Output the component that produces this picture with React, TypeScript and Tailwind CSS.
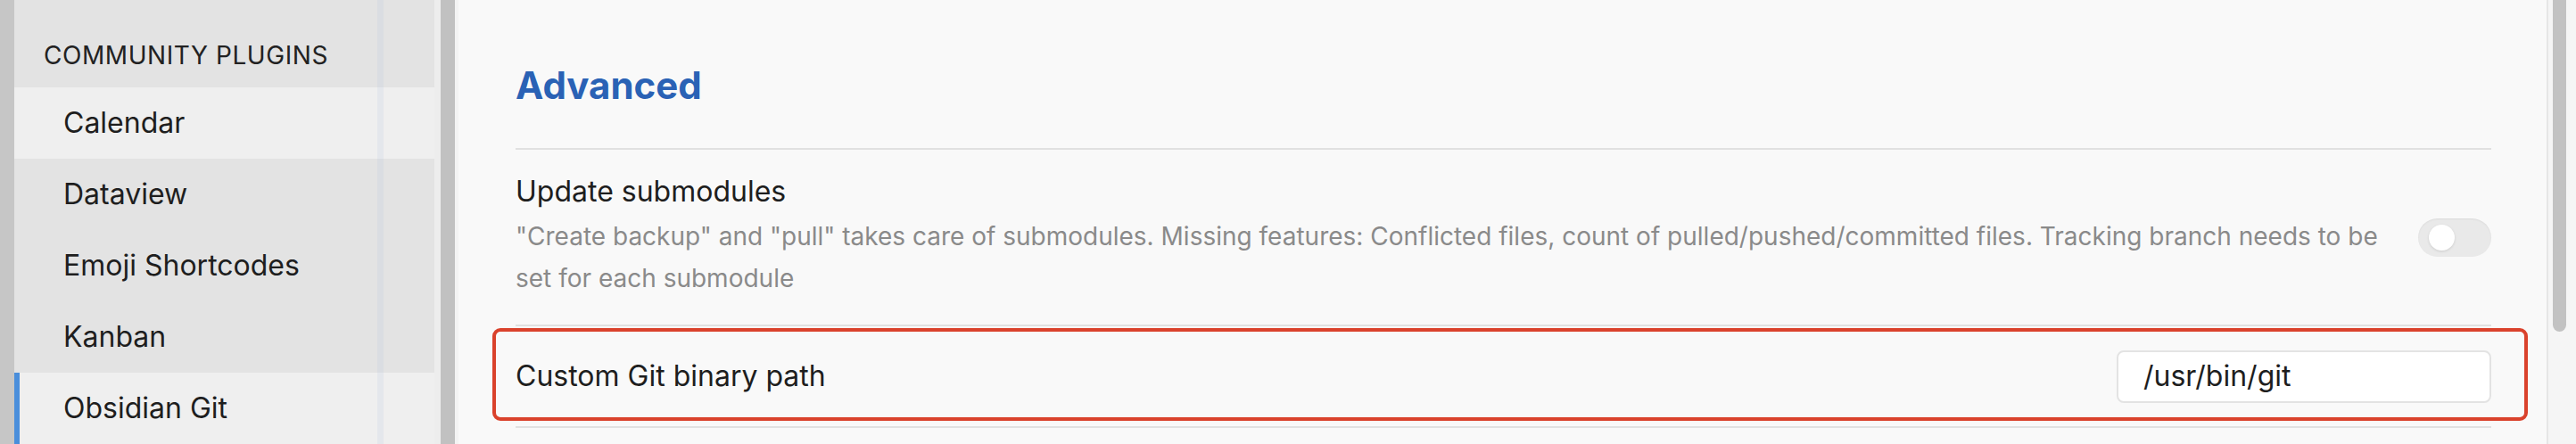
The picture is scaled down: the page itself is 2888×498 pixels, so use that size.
const plugins = ["Calendar", "Dataview", "Emoji Shortcodes", "Kanban", "Obsidian Git"];

function Sidebar() {
  return (
    <aside className="relative flex w-[471px] shrink-0 flex-col bg-[#e3e3e3]">
      <div className="h-[98px] shrink-0 pl-[33px] pt-[46px] text-[28px] leading-[32px] tracking-[0.02em] text-[#222]">
        COMMUNITY PLUGINS
      </div>
      {plugins.map((name) => {
        const active = name === "Obsidian Git";
        const hovered = name === "Calendar";
        return (
          <div
            key={name}
            className={
              active
                ? "flex h-[80px] shrink-0 items-center border-l-[6px] border-[#4a8edb] bg-[#efefef] pl-[49px] text-[32px] text-[#1e1e1e]"
                : hovered
                  ? "flex h-[80px] shrink-0 items-center bg-[#efefef] pl-[55px] text-[32px] text-[#1e1e1e]"
                  : "flex h-[80px] shrink-0 items-center pl-[55px] text-[32px] text-[#1e1e1e]"
            }
          >
            {name}
          </div>
        );
      })}
      {/* faint guide stripe visible in the capture */}
      <div className="pointer-events-none absolute inset-y-0 left-[407px] w-[7px] bg-[#a9bde0]/15" />
    </aside>
  );
}

function Toggle() {
  return (
    <div className="flex h-[43px] w-[82px] shrink-0 items-center rounded-full bg-[#e9e9e9] pl-[12px] shadow-[inset_0_1px_2px_rgba(0,0,0,0.06)]">
      <div className="h-[29px] w-[29px] rounded-full bg-white shadow-[0_1px_3px_rgba(0,0,0,0.12)]" />
    </div>
  );
}

function Settings() {
  return (
    <main className="relative flex-1 bg-[#f9f9f9] pl-[64px] pr-[62px]">
      <h2 className="pt-[72px] text-[42px] font-bold leading-[48px] text-[#2a62b5]">Advanced</h2>
      <div className="mt-[46px] border-t-2 border-[#e1e1e1]">
        <div className="flex items-center pb-[28px] pt-[29px]">
          <div className="flex-1 pr-[40px]">
            <div className="text-[32px] leading-[36px] text-[#1e1e1e]">Update submodules</div>
            <div className="mt-[9px] text-[28px] leading-[47px] text-[#8a8a8a]">
              "Create backup" and "pull" takes care of submodules. Missing features: Conflicted files, count of
              pulled/pushed/committed files. Tracking branch needs to be
              <br />
              set for each submodule
            </div>
          </div>
          <Toggle />
        </div>
      </div>
      <div className="flex h-[114px] items-center border-t-2 border-[#e1e1e1]">
        <div className="flex-1 text-[32px] leading-[36px] text-[#1e1e1e]">Custom Git binary path</div>
        <div className="flex h-[59px] w-[420px] items-center rounded-[8px] border-2 border-[#e3e3e3] bg-white pl-[28px] text-[32px] text-[#1e1e1e]">
          /usr/bin/git
        </div>
      </div>
      <div className="border-t-2 border-[#e1e1e1]" />
      {/* annotation box drawn over the setting row */}
      <div className="pointer-events-none absolute left-[38px] top-[368px] h-[104px] w-[2282px] rounded-[9px] border-4 border-[#da422c]" />
    </main>
  );
}

export default function App() {
  return (
    <div className="flex h-[498px] w-[2888px] overflow-hidden font-[Inter,sans-serif]">
      <div className="w-[16px] shrink-0 bg-[#c6c6c6]" />
      <Sidebar />
      <div className="w-[7px] shrink-0 bg-[#ededed]" />
      <div className="w-[16px] shrink-0 bg-[#c1c1c1]" />
      <div className="w-[4px] shrink-0 bg-[#f3f3f3]" />
      <Settings />
      <div className="w-[2px] shrink-0 bg-[#e6e6e6]" />
      <div className="w-[31px] shrink-0 bg-[#f5f5f5] pl-[5px]">
        <div className="h-[372px] w-[15px] rounded-b-full bg-[#c2c2c2]" />
      </div>
    </div>
  );
}
